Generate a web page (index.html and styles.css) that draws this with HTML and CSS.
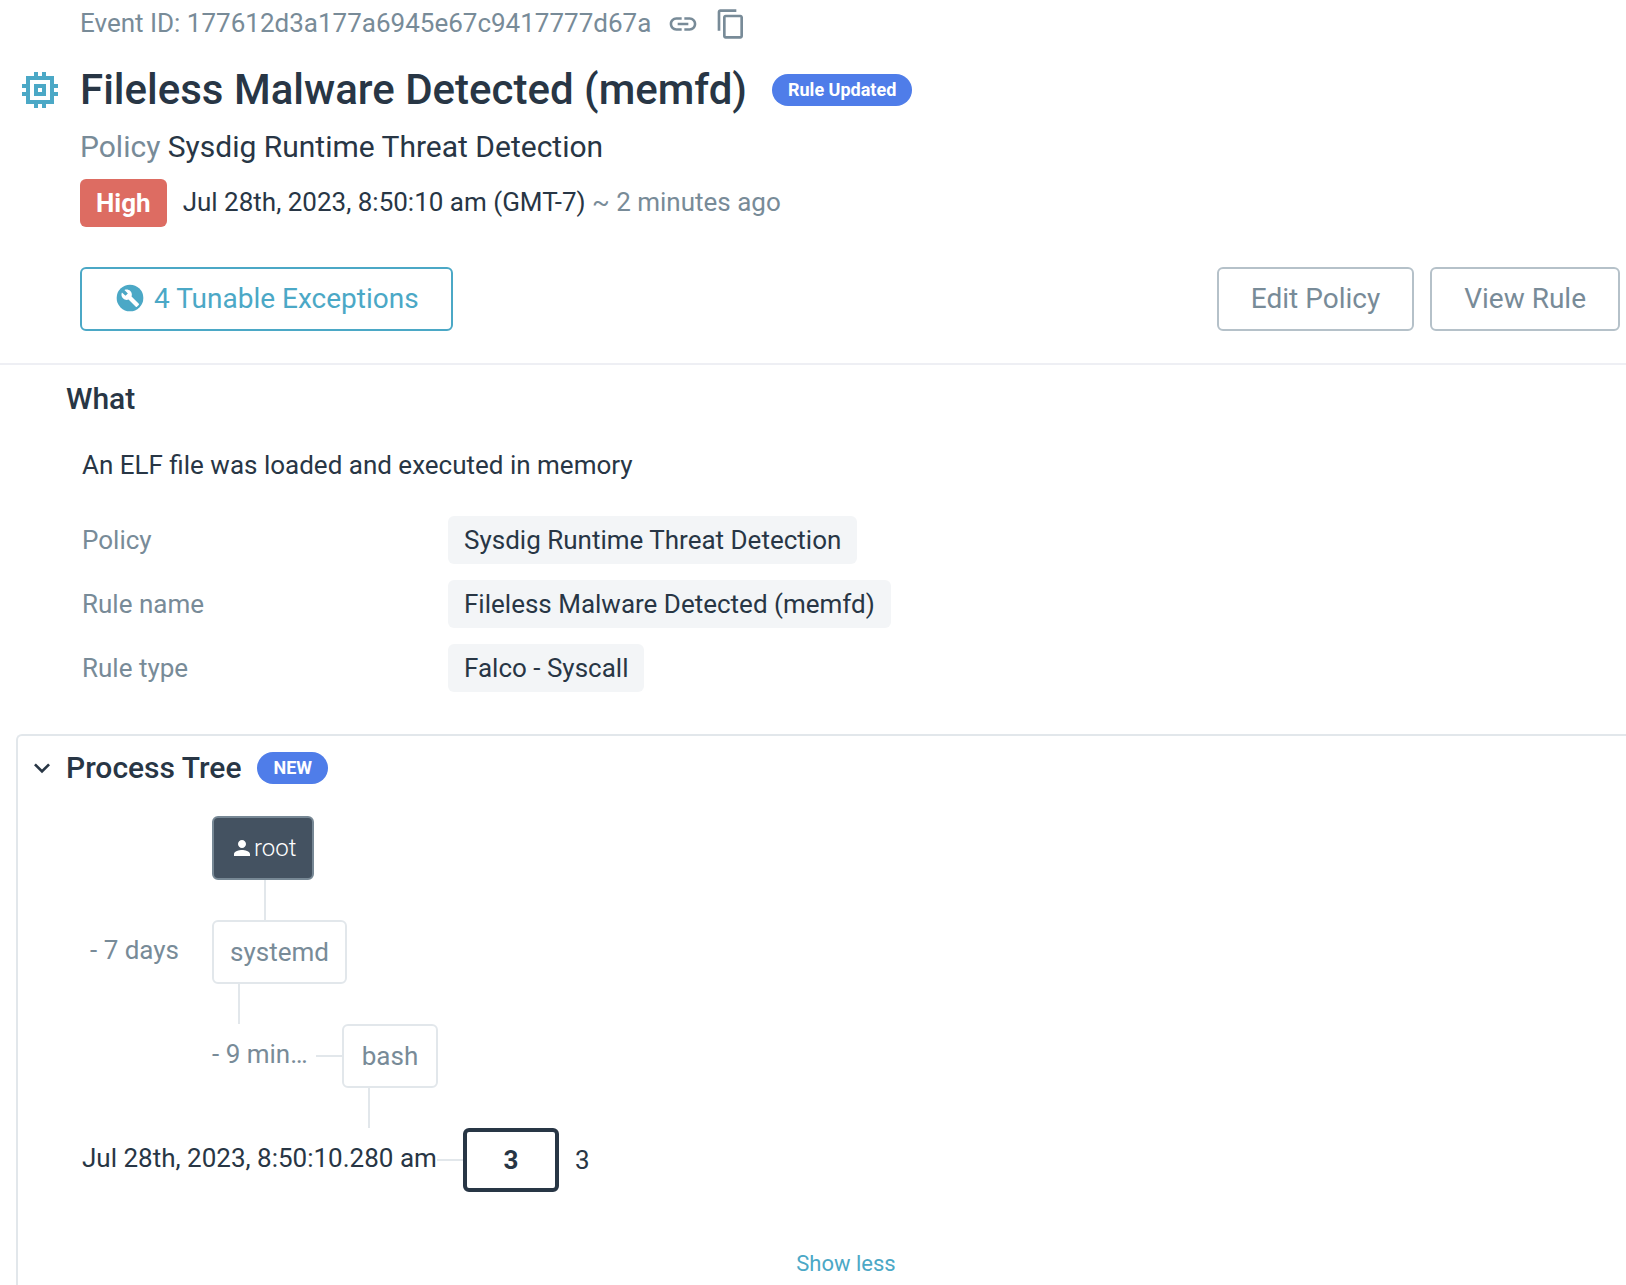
FILE: index.html
```html
<!DOCTYPE html>
<html lang="en">
<head>
<meta charset="utf-8">
<meta name="viewport" content="width=device-width, initial-scale=1">
<title>Fileless Malware Detected (memfd)</title>
<link rel="stylesheet" href="styles.css">
</head>
<body>
<header class="event-header">
  <div class="event-id">
    <span class="raised">Event ID: 177612d3a177a6945e67c9417777d67a</span>
    <button class="icon-button" type="button" aria-label="Copy link">
      <svg class="icon" viewBox="0 0 24 24"><path d="M3.900 12c0-1.710 1.390-3.100 3.100-3.100h4V7H7c-2.760 0-5 2.240-5 5s2.240 5 5 5h4v-1.900H7c-1.710 0-3.100-1.390-3.100-3.100zM8 13h8v-2H8v2zm9-6h-4v1.900h4c1.710 0 3.100 1.390 3.100 3.100s-1.390 3.100-3.100 3.100h-4V17h4c2.760 0 5-2.240 5-5s-2.240-5-5-5z"/></svg>
    </button>
    <button class="icon-button" type="button" aria-label="Copy event ID">
      <svg class="icon" viewBox="0 0 24 24"><path d="M16 1H4c-1.100 0-2 .9-2 2v14h2V3h12V1zm3 4H8c-1.100 0-2 .9-2 2v14c0 1.100.9 2 2 2h11c1.100 0 2-.9 2-2V7c0-1.100-.9-2-2-2zm0 16H8V7h11v14z"/></svg>
    </button>
  </div>
  <div class="title-row">
    <svg class="icon icon-large" viewBox="0 0 24 24" aria-hidden="true"><path d="M15 9H9v6h6V9zm-2 4h-2v-2h2v2zm8-2V9h-2V5h-4V3h-2v2h-2V3H9v2H5v4H3v2h2v2H3v2h2v4h4v2h2v-2h2v2h2v-2h4v-4h2v-2h-2v-2h2zm-4 6H7V7h10v10z"/></svg>
    <h1 class="title">Fileless Malware Detected (memfd)</h1>
    <span class="pill">Rule Updated</span>
  </div>
  <p class="policy-line"><span class="muted">Policy</span> Sysdig Runtime Threat Detection</p>
  <div class="severity-row">
    <span class="severity">High</span>
    <span class="raised">Jul 28th, 2023, 8:50:10 am (GMT-7) <span class="muted">~ 2 minutes ago</span></span>
  </div>
  <div class="actions">
    <button class="button button-accent" type="button">
      <svg class="icon" viewBox="0 0 24 24" aria-hidden="true"><circle cx="12" cy="12" r="10"/><path class="wrench" transform="translate(5 5) scale(.6)" d="M22.700 19l-9.100-9.100c.9-2.300.4-5-1.500-6.900-2-2-5-2.400-7.400-1.300L9 6 6 9 1.600 4.700C.4 7.100.9 10.100 2.900 12.100c1.900 1.900 4.600 2.400 6.900 1.500l9.100 9.100c.4.4 1 .4 1.400 0l2.300-2.300c.5-.4.5-1.100.1-1.400z"/></svg>
      4 Tunable Exceptions
    </button>
    <div class="action-group">
      <button class="button" type="button">Edit Policy</button>
      <button class="button" type="button">View Rule</button>
    </div>
  </div>
</header>
<main class="content">
  <section class="what">
    <h2 class="section-title">What</h2>
    <p class="description">An ELF file was loaded and executed in memory</p>
    <dl class="details">
      <dt>Policy</dt><dd><span class="tag">Sysdig Runtime Threat Detection</span></dd>
      <dt>Rule name</dt><dd><span class="tag">Fileless Malware Detected (memfd)</span></dd>
      <dt>Rule type</dt><dd><span class="tag">Falco - Syscall</span></dd>
    </dl>
  </section>
  <section class="panel">
    <div class="panel-header">
      <button class="icon-button chevron" type="button" aria-label="Collapse process tree">
        <svg class="icon" viewBox="0 0 24 24"><path d="M16.590 8.590L12 13.170 7.410 8.590 6 10l6 6 6-6z"/></svg>
      </button>
      <h2 class="section-title">Process Tree</h2>
      <span class="pill">NEW</span>
    </div>
    <div class="tree">
      <div class="tree-row level-one">
        <div class="node node-user">
          <svg class="icon icon-small" viewBox="0 0 24 24" aria-hidden="true"><path d="M12 12c2.210 0 4-1.790 4-4s-1.790-4-4-4-4 1.790-4 4 1.790 4 4 4zm0 2c-2.670 0-8 1.340-8 4v2h16v-2c0-2.660-5.330-4-8-4z"/></svg>root
        </div>
      </div>
      <div class="stem stem-user"></div>
      <div class="tree-row">
        <span class="age age-first">- 7 days</span>
        <div class="node">systemd</div>
      </div>
      <div class="stem stem-parent"></div>
      <div class="tree-row level-one">
        <span class="age age-branch">- 9 min…</span>
        <span class="branch"></span>
        <div class="node">bash</div>
      </div>
      <div class="stem stem-child"></div>
      <div class="tree-row">
        <span class="age age-current">Jul 28th, 2023, 8:50:10.280 am</span>
        <span class="branch"></span>
        <div class="node node-current">3</div>
        <span class="command">3</span>
      </div>
    </div>
    <div class="panel-footer"><button class="link-button" type="button">Show less</button></div>
  </section>
</main>
</body>
</html>
```
FILE: styles.css
```css
:root {
  --ink: #283645;
  --muted: #788b98;
  --accent: #4ba8c6;
  --blue: #4f7de9;
  --line: #e2e7eb;
}

* { box-sizing: border-box; }

body {
  display: flex;
  flex-direction: column;
  min-height: 100vh;
  margin: 0;
  background: #fff;
  color: var(--ink);
  font: 400 26px/32px Roboto, sans-serif;
}

h1, h2, p, dl, dd { margin: 0; }

button {
  font-family: inherit;
  cursor: pointer;
}

.muted { color: var(--muted); }

.icon {
  display: block;
  flex: none;
  width: 32px;
  height: 32px;
  fill: currentColor;
}

.icon-large {
  width: 48px;
  height: 48px;
  color: var(--accent);
}

.icon-small {
  width: 24px;
  height: 24px;
}

.icon-button {
  padding: 0;
  border: 0;
  background: none;
  color: inherit;
}

.event-header {
  padding: 7px 6px 32px 80px;
  border-bottom: 2px solid #eeeff4;
}

.event-id {
  display: flex;
  align-items: center;
  gap: 16px;
  color: var(--muted);
}

.title-row {
  display: flex;
  align-items: center;
  margin: 25px 0 15px -64px;
}

.title {
  margin: 0 25px 0 16px;
  font-size: 42px;
  font-weight: 500;
  line-height: 48px;
}

.pill {
  padding: 0 16px;
  border-radius: 16px;
  background: var(--blue);
  color: #fff;
  font-size: 18px;
  font-weight: 700;
  line-height: 32px;
}

.policy-line {
  font-size: 30px;
  line-height: 36px;
}

.severity-row {
  display: flex;
  align-items: center;
  gap: 16px;
  margin-top: 14px;
}

.severity {
  padding: 8px 16px;
  border-radius: 6px;
  background: #dd6c62;
  color: #fff;
  font-weight: 700;
}

.raised { padding-bottom: 2px; }

.actions {
  display: flex;
  justify-content: space-between;
  margin-top: 40px;
}

.action-group {
  display: flex;
  gap: 16px;
}

.button {
  display: flex;
  align-items: center;
  gap: 8px;
  height: 64px;
  padding: 0 32px 2px;
  border: 2px solid #b5c1c9;
  border-radius: 6px;
  background: #fff;
  color: var(--muted);
  font-size: 28px;
}

.button-accent {
  border-color: var(--accent);
  color: var(--accent);
}

.wrench { fill: #fff; }

.content {
  display: flex;
  flex: 1;
  flex-direction: column;
}

.what { padding: 18px 16px 42px 66px; }

.section-title {
  font-size: 30px;
  font-weight: 500;
  line-height: 32px;
}

.description { margin: 34px 0 35px 16px; }

.details {
  display: grid;
  grid-template-columns: 366px 1fr;
  gap: 16px 0;
  margin-left: 16px;
  line-height: 48px;
}

.details dt { color: var(--muted); }

.tag {
  display: inline-block;
  padding: 0 16px;
  border-radius: 6px;
  background: #f3f5f7;
  vertical-align: top;
}

.panel {
  flex: 1;
  margin-left: 16px;
  padding: 16px 0 0 8px;
  border: 2px solid var(--line);
  border-width: 2px 0 0 2px;
  border-radius: 6px 0 0 0;
}

.panel-header {
  display: flex;
  align-items: center;
}

.chevron {
  margin-right: 8px;
  color: var(--ink);
}

.panel-header .pill { margin-left: 16px; }

.tree { padding: 32px 0 0 56px; }

.tree-row {
  display: flex;
  align-items: center;
  height: 64px;
}

.level-one { margin-left: 130px; }

.node {
  display: flex;
  align-items: center;
  justify-content: center;
  min-width: 96px;
  height: 64px;
  padding: 0 16px;
  border: 2px solid var(--line);
  border-radius: 6px;
  color: var(--muted);
}

.node-user {
  border-color: #778895;
  background: #445261;
  color: #fff;
  font-size: 24px;
  font-weight: 300;
}

.node-current {
  border: 4px solid var(--ink);
  color: var(--ink);
  font-weight: 700;
}

.command { margin-left: 16px; }

.age {
  flex: none;
  padding-bottom: 4px;
  color: var(--muted);
  white-space: nowrap;
}

.age-first {
  width: 130px;
  padding-left: 8px;
}

.age-branch { width: 104px; }

.age-current {
  min-width: 355px;
  color: var(--ink);
}

.branch {
  width: 26px;
  height: 2px;
  background: var(--line);
}

.stem {
  width: 2px;
  height: 40px;
  background: var(--line);
}

.stem-user { margin-left: 182px; }

.stem-parent { margin-left: 156px; }

.stem-child { margin-left: 286px; }

.panel-footer {
  display: flex;
  justify-content: center;
  margin-top: 56px;
  padding-left: 40px;
}

.link-button {
  padding: 0;
  border: 0;
  background: none;
  color: var(--accent);
  font-size: 22px;
  line-height: 32px;
}
```
